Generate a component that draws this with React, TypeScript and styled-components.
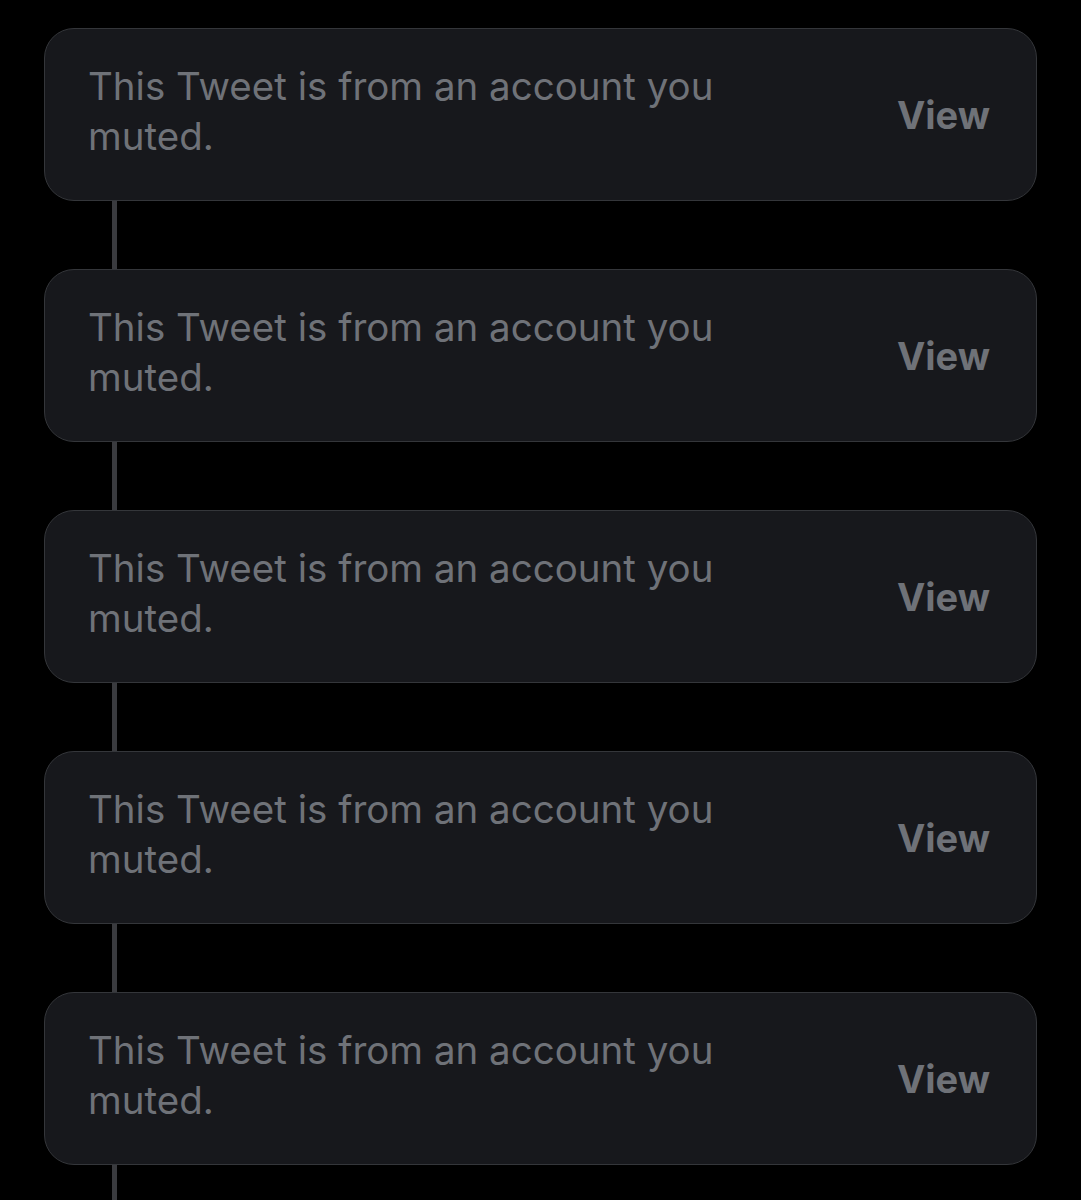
import styled, { createGlobalStyle } from 'styled-components';
import React from 'react';

const GlobalStyle = createGlobalStyle`
  html, body {
    margin: 0;
    padding: 0;
    background-color: #000;
  }
`

const Thread = styled.main`
  display: flex;
  flex-direction: column;
  width: 1081px;
  min-height: 1200px;
  padding: 28px 44px 0 44px;
  box-sizing: border-box;
  background-color: #000;
  overflow: hidden;
  font-family: Inter, 'Noto Sans', sans-serif;
`

const Connector = styled.div<{ $height: number }>`
  width: 5px;
  height: ${p => p.$height}px;
  margin-left: 68px;
  background-color: #3a3b3f;
`

const MutedCard = styled.article`
  display: flex;
  align-items: center;
  justify-content: space-between;
  height: 173px;
  padding: 0 46px 0 43px;
  box-sizing: border-box;
  background-color: #17181c;
  border: 1.5px solid #34363a;
  border-radius: 30px;
`

const MutedText = styled.p`
  margin: 0;
  max-width: 670px;
  font-size: 38.5px;
  line-height: 50px;
  font-weight: 400;
  color: #6f7278;
  margin-top: -8px;
`

const ViewButton = styled.span`
  font-size: 38px;
  font-weight: 700;
  color: #6f7278;
  cursor: pointer;
`

const App: React.FC = () => {
  const items = [1, 2, 3, 4, 5]

  return (
    <>
      <GlobalStyle />
      <Thread>
        {items.map((id, i) => (
          <React.Fragment key={id}>
            <MutedCard>
              <MutedText>This Tweet is from an account you muted.</MutedText>
              <ViewButton>View</ViewButton>
            </MutedCard>
            <Connector $height={i === items.length - 1 ? 60 : 68} />
          </React.Fragment>
        ))}
      </Thread>
    </>
  );
}

export default App;
